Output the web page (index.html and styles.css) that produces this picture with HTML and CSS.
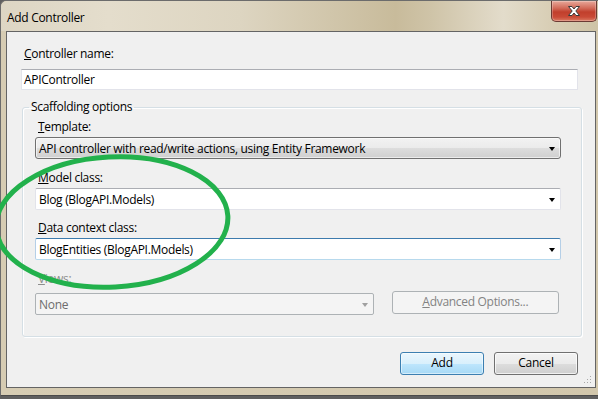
FILE: index.html
```html
<!DOCTYPE html>
<html>
<head>
<meta charset="utf-8">
<link rel="stylesheet" href="styles.css">
</head>
<body>
<div class="window">
  <div class="titlebar">
    <span class="title">Add Controller</span>
    <div class="close">
      <svg width="16" height="12" viewBox="0 0 16 12">
        <path d="M2.5 1.5 L6 1.5 L8 4 L10 1.5 L13.5 1.5 L9.8 6 L13.5 10.5 L10 10.5 L8 8 L6 10.5 L2.5 10.5 L6.2 6 Z" fill="#ffffff" stroke="#3a3a3a" stroke-width="1" stroke-linejoin="round"/>
      </svg>
    </div>
  </div>
  <div class="client">
    <div class="label top-label"><u>C</u>ontroller name:</div>
    <div class="textbox">APIController</div>
    <fieldset class="group">
      <legend><span>Scaffolding options</span></legend>
      <div class="label"><u>T</u>emplate:</div>
      <div class="combo combo-btn"><span>API controller with read/write actions, using Entity Framework</span><i class="arrow"></i></div>
      <div class="label"><u>M</u>odel class:</div>
      <div class="combo combo-edit"><span>Blog (BlogAPI.Models)</span><i class="arrow"></i></div>
      <div class="label"><u>D</u>ata context class:</div>
      <div class="combo combo-edit focused"><span>BlogEntities (BlogAPI.Models)</span><i class="arrow"></i></div>
      <div class="label disabled"><u>V</u>iews:</div>
      <div class="view-row">
        <div class="combo combo-disabled"><span>None</span><i class="arrow"></i></div>
        <div class="btn btn-disabled"><u>A</u>dvanced Options...</div>
      </div>
    </fieldset>
    <div class="actions">
      <div class="btn btn-default">Add</div>
      <div class="btn">Cancel</div>
    </div>
    <svg class="grip" width="8" height="8" viewBox="0 0 8 8">
      <g fill="#a8a8a8">
        <rect x="6" y="0" width="1" height="1"/>
        <rect x="3" y="3" width="1" height="1"/><rect x="6" y="3" width="1" height="1"/>
        <rect x="0" y="6" width="1" height="1"/><rect x="3" y="6" width="1" height="1"/><rect x="6" y="6" width="1" height="1"/>
      </g>
    </svg>
  </div>
</div>
<svg class="annotation" width="260" height="150" viewBox="0 0 260 150">
  <ellipse cx="116" cy="70" rx="116" ry="65" fill="none" stroke="#22b14c" stroke-width="5" transform="rotate(-3 116 70)"/>
</svg>
</body>
</html>
```
FILE: styles.css
```css
html, body {
  margin: 0;
  padding: 0;
}
body {
  width: 598px;
  height: 399px;
  overflow: hidden;
  background: #5f5f5f;
  font-family: "Open Sans", "Noto Sans", sans-serif;
  font-size: 12px;
  letter-spacing: -0.3px;
  color: #000;
  position: relative;
}
.window {
  width: 598px;
  height: 394px;
  border-top: 1px solid #6c6c6c;
  border-left: 1px solid #6c6c6c;
  border-bottom: 1px solid #4a4a4a;
  border-top-left-radius: 6px;
  background: linear-gradient(to right, #d6ccb3 0%, #d2c7ac 100%);
  box-sizing: content-box;
}
.titlebar {
  height: 30px;
  display: flex;
  align-items: flex-start;
  border-top-left-radius: 6px;
  background: linear-gradient(to right, #ddd6c4 0%, #e4ddcc 18%, #ddd5c1 40%, #c8bb9b 66%, #cfc4a8 72%, #e3dccb 84%, #d8ceb5 92%, #cec3a6 100%);
}
.title {
  margin: 9px 0 0 6px;
  line-height: 16px;
  font-size: 12px;
}
.close {
  margin-left: auto;
  margin-right: 2px;
  width: 44px;
  height: 20px;
  border: 1px solid #6b3a33;
  border-top: none;
  border-radius: 0 0 5px 5px;
  background: linear-gradient(to bottom, #e8a89a 0%, #d36c5a 35%, #c13f2c 55%, #c94a36 80%, #db7a62 100%);
  display: flex;
  align-items: center;
  justify-content: center;
  box-shadow: inset 0 0 0 1px rgba(255,255,255,0.25);
}
.close svg {
  display: block;
  margin-top: -1px;
}
.client {
  margin-left: 5px;
  width: 588px;
  height: 355px;
  border: 1px solid #646464;
  background: #f0f0f0;
  display: flex;
  flex-direction: column;
  position: relative;
}
.label {
  line-height: 16px;
  height: 16px;
  white-space: nowrap;
}
.top-label {
  margin: 14px 0 0 17px;
}
.textbox {
  margin: 7px 0 0 14px;
  width: 553px;
  height: 19px;
  line-height: 19px;
  padding: 0 0 0 2px;
  border: 1px solid #e2e3ea;
  border-top-color: #abadb3;
  background: #fff;
}
.group {
  margin: 9px 0 0 15px;
  width: 526px;
  padding: 4px 20px 20px 12px;
  border: 1px solid #d5dfe5;
  border-radius: 3px;
  box-shadow: inset 1px 1px 0 #fff, 1px 1px 0 #fff;
  min-inline-size: 0;
  height: 212px;
  box-sizing: content-box;
}
.group legend {
  padding: 0 2px;
  margin-left: -6px;
  line-height: 16px;
  height: 16px;
}
.group .label {
  margin-left: 3px;
}
.combo {
  margin-top: 2px;
  height: 20px;
  width: 522px;
  display: flex;
  align-items: center;
  padding-left: 2px;
  border-radius: 2px;
  position: relative;
}
.combo span {
  flex: 1;
  white-space: nowrap;
  padding-left: 1px;
}
.combo + .label {
  margin-top: 11px;
}
.arrow {
  width: 0;
  height: 0;
  border-left: 3.5px solid transparent;
  border-right: 3.5px solid transparent;
  border-top: 4px solid #000;
  margin-right: 5px;
  margin-top: 1px;
}
.combo-btn {
  border: 1px solid #707070;
  border-radius: 3px;
  background: linear-gradient(to bottom, #f2f2f2 0%, #ebebeb 50%, #dddddd 51%, #cfcfcf 100%);
  box-shadow: inset 0 0 0 1px rgba(255,255,255,0.6);
}
.combo-edit {
  border: 1px solid #e2e3ea;
  border-top-color: #abadb3;
  background: #fff;
}
.combo-edit.focused {
  border-color: #b7d9ed;
  border-top-color: #3d7bad;
  border-left-color: #b5cfe7;
  border-right-color: #b5cfe7;
}
.combo-edit + .label {
  margin-top: 10px;
}
.combo-edit.focused + .label {
  margin-top: 11px;
}
.label.disabled {
  color: #8d8d8d;
}
.view-row {
  margin-top: 4px;
  display: flex;
  gap: 18px;
  width: 524px;
}
.combo-disabled {
  width: 336px;
  border: 1px solid #adb2b5;
  background: #f4f4f4;
  color: #6d6d6d;
}
.combo-disabled .arrow {
  border-top-color: #a0a0a0;
}
.btn {
  width: 82px;
  height: 21px;
  line-height: 20px;
  text-align: center;
  border: 1px solid #707070;
  border-radius: 3px;
  background: linear-gradient(to bottom, #f2f2f2 0%, #ebebeb 50%, #dddddd 51%, #cfcfcf 100%);
  box-shadow: inset 0 0 0 1px rgba(255,255,255,0.7);
}
.btn-disabled {
  width: 166px;
  height: 21px;
  border-color: #adb2b5;
  background: #f4f4f4;
  color: #838383;
  box-shadow: none;
}
.btn-default {
  border-color: #3c7fb1;
  background: linear-gradient(to bottom, #eaf6fd 0%, #d9f0fc 50%, #bee6fd 51%, #a7d9f5 100%);
  box-shadow: inset 0 0 0 1px rgba(255,255,255,0.5);
}
.actions {
  margin: 15px 17px 0 0;
  display: flex;
  justify-content: flex-end;
  gap: 10px;
}
.grip {
  position: absolute;
  right: 3px;
  bottom: 3px;
}
.annotation {
  position: absolute;
  left: -4px;
  top: 152px;
  pointer-events: none;
}
```
